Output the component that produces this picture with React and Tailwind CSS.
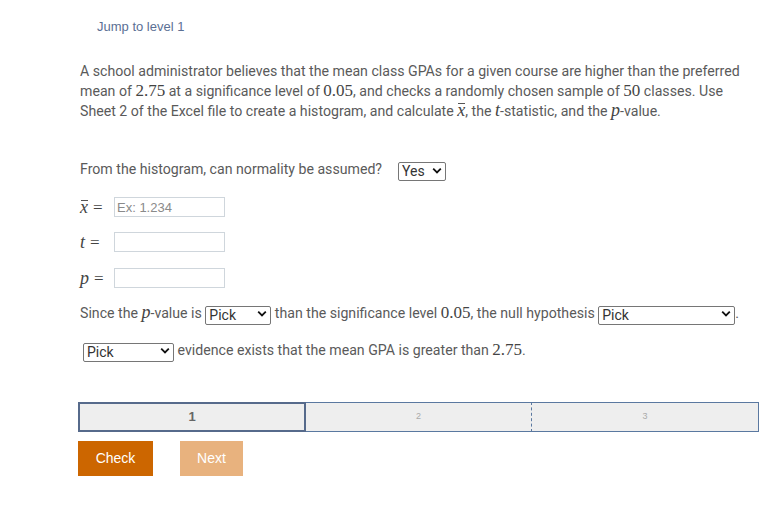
import React from "react";

const M = ({ children, italic }) => (
  <span
    className={`${italic ? "text-[18px] italic" : "text-[17px]"} leading-none text-[#444]`}
    style={{ fontFamily: '"Liberation Serif", "DejaVu Serif", serif' }}
  >
    {children}
  </span>
);

const XBar = () => (
  <span className="relative inline-block text-[18px] leading-none italic text-[#444]" style={{ fontFamily: '"Liberation Serif", serif' }}>
    <span className="absolute left-[1px] right-0 top-[2px] h-px bg-[#555]" />
    x
  </span>
);

const Chevron = () => (
  <svg width="10" height="7" viewBox="0 0 10 7" className="absolute right-[4px] top-1/2 -translate-y-1/2 pointer-events-none">
    <path d="M1.2 1.2 L5 5 L8.8 1.2" fill="none" stroke="#111" strokeWidth="1.8" />
  </svg>
);

const Select = ({ w, label }) => (
  <span className={`relative inline-block align-middle ${w} h-[19px]`}>
    <select
      className="appearance-none w-full h-full border border-[#767676] rounded-[2px] pl-[3px] text-[14px] leading-[17px] text-[#333] bg-white"
      style={{ fontFamily: 'Roboto, "Liberation Sans", sans-serif' }}
      defaultValue={label}
    >
      <option>{label}</option>
    </select>
    <Chevron />
  </span>
);

const Input = ({ placeholder }) => (
  <input
    className="w-[111px] h-[20px] border border-[#cfd6dc] px-[2px] text-[13px] text-[#555] placeholder:text-[#8a8a8a] outline-none"
    style={{ fontFamily: '"Liberation Sans", Arial, sans-serif' }}
    placeholder={placeholder}
  />
);

export default function App() {
  return (
    <div
      className="w-[777px] h-[511px] bg-white text-[#5a5a5a] text-[14.15px]"
      style={{ fontFamily: 'Roboto, "Liberation Sans", sans-serif' }}
    >
      <div
        className="pt-[19px] pl-[97px] h-[35px] text-[13px] leading-4 text-[#5b6f94]"
        style={{ fontFamily: '"Liberation Sans", Arial, sans-serif' }}
      >
        Jump to level 1
      </div>

      <div className="pl-[80px] pr-[20px]">
        <p className="mt-[26px] leading-[20px] w-[680px]">
          A school administrator believes that the mean class GPAs for a given course are higher than the preferred
          <br />
          mean of <M>2.75</M> at a significance level of <M>0.05</M>, and checks a randomly chosen sample of <M>50</M> classes. Use
          <br />
          Sheet 2 of the Excel file to create a histogram, and calculate <XBar />, the <M italic>t</M>-statistic, and the <M italic>p</M>-value.
        </p>

        <div className="mt-[39px] h-[20px] flex items-center">
          <span>From the histogram, can normality be assumed?</span>
          <span className="ml-[16px]">
            <Select w="w-[48px]" label="Yes" />
          </span>
        </div>

        <div className="mt-[17px] h-[20px] flex items-center">
          <span className="w-[34px] flex items-center gap-[5px]">
            <XBar />
            <M>=</M>
          </span>
          <Input placeholder="Ex: 1.234" />
        </div>

        <div className="mt-[15px] h-[20px] flex items-center">
          <span className="w-[34px] flex items-center gap-[5px]">
            <M italic>t</M>
            <M>=</M>
          </span>
          <Input />
        </div>

        <div className="mt-[16px] h-[20px] flex items-center">
          <span className="w-[34px] flex items-center gap-[5px]">
            <M italic>p</M>
            <M>=</M>
          </span>
          <Input />
        </div>

        <div className="mt-[16px] h-[20px] flex items-center whitespace-nowrap">
          <span>Since the <M italic>p</M>-value is&nbsp;</span>
          <Select w="w-[66px]" label="Pick" />
          <span>&nbsp;than the significance level <M>0.05</M>, the null hypothesis&nbsp;</span>
          <Select w="w-[137px]" label="Pick" />
          <span>.</span>
        </div>

        <div className="mt-[17px] h-[20px] flex items-center whitespace-nowrap pl-[3px]">
          <Select w="w-[91px]" label="Pick" />
          <span>&nbsp;evidence exists that the mean GPA is greater than <M>2.75</M>.</span>
        </div>
      </div>

      <div className="ml-[78px] mt-[41px] w-[681px] h-[30px] flex bg-[#eeeeee]">
        <div
          className="w-[228px] h-full border-2 border-[#566a8b] flex items-center justify-center text-[13px] font-bold text-[#666]"
          style={{ fontFamily: '"Liberation Sans", Arial, sans-serif' }}
        >
          1
        </div>
        <div
          className="w-[226px] h-full border-y border-r border-[#5a78a0] flex items-center justify-center text-[9px] text-[#aaa]"
          style={{ borderRightStyle: "dashed", fontFamily: '"Liberation Sans", Arial, sans-serif' }}
        >
          2
        </div>
        <div
          className="flex-1 h-full border-y border-r border-[#5a78a0] flex items-center justify-center text-[9px] text-[#aaa]"
          style={{ fontFamily: '"Liberation Sans", Arial, sans-serif' }}
        >
          3
        </div>
      </div>

      <div className="ml-[78px] mt-[9px] flex gap-[27px]" style={{ fontFamily: '"Liberation Sans", Arial, sans-serif' }}>
        <button className="w-[75px] h-[35px] bg-[#cc6600] text-white text-[14px]">Check</button>
        <button className="w-[63px] h-[35px] bg-[#e8b27e] text-white text-[14px]">Next</button>
      </div>
    </div>
  );
}
